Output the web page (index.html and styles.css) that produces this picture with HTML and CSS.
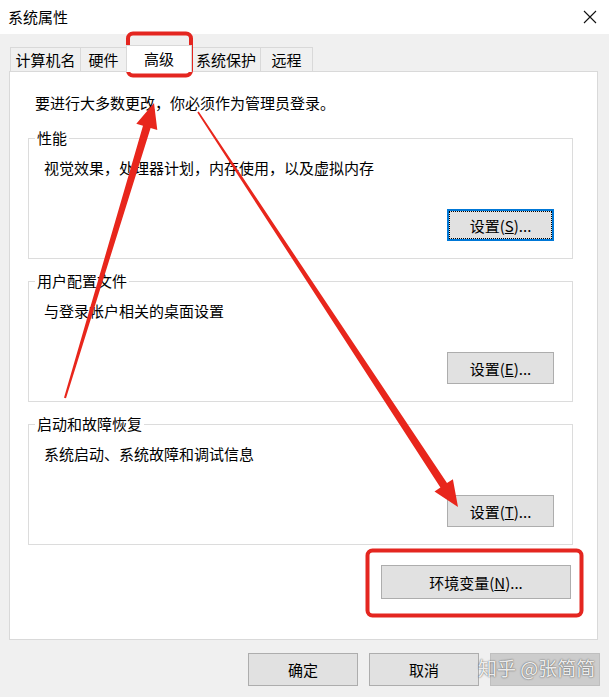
FILE: index.html
```html
<!DOCTYPE html>
<html>
<head>
    <title>系统属性</title>
    <link rel="stylesheet" href="styles.css">
</head>
<body>
    <div class="window">
        <div class="titlebar">
            <span class="title">系统属性</span>
            <svg class="close" width="14" height="14" viewBox="0 0 14 14">
                <path d="M1 1 L13 13 M13 1 L1 13" stroke="#111" stroke-width="1.1" fill="none"/>
            </svg>
        </div>

        <div class="tabs">
            <div class="tab tab-name">计算机名</div>
            <div class="tab tab-hw">硬件</div>
            <div class="tab tab-adv active">高级</div>
            <div class="tab tab-sys">系统保护</div>
            <div class="tab tab-remote">远程</div>
        </div>

        <div class="panel">
            <p class="intro">要进行大多数更改，你必须作为管理员登录。</p>

            <fieldset class="group">
                <legend>性能</legend>
                <p class="desc">视觉效果，处理器计划，内存使用，以及虚拟内存</p>
                <button class="btn focused">设置(<u>S</u>)...</button>
            </fieldset>

            <fieldset class="group">
                <legend>用户配置文件</legend>
                <p class="desc">与登录帐户相关的桌面设置</p>
                <button class="btn">设置(<u>E</u>)...</button>
            </fieldset>

            <fieldset class="group last">
                <legend>启动和故障恢复</legend>
                <p class="desc">系统启动、系统故障和调试信息</p>
                <button class="btn">设置(<u>T</u>)...</button>
            </fieldset>

            <div class="env-row">
                <button class="btn btn-wide">环境变量(<u>N</u>)...</button>
            </div>
        </div>

        <div class="footer">
            <button class="btn btn-footer">确定</button>
            <button class="btn btn-footer">取消</button>
            <button class="btn btn-footer disabled" aria-label="应用"></button>
        </div>

        <div class="watermark">知乎 @张简简</div>

        <!-- red annotations drawn on top of the screenshot -->
        <svg class="annotations" width="609" height="697" viewBox="0 0 609 697">
            <rect x="128" y="33.5" width="63" height="42" rx="5" fill="none" stroke="#e42620" stroke-width="4"/>
            <rect x="367.5" y="550.5" width="214" height="65" rx="5" fill="none" stroke="#e42620" stroke-width="4"/>
            <polygon fill="#e8261c" points="64,397.7 143,125.7 136.3,123.7 154,103 157.3,130.1 150.6,128.1 66,398.3"/>
            <polygon fill="#e8261c" points="197.3,112.4 440.4,487.5 434.5,491.4 458,507 452.9,479.2 447,483.1 198.7,111.6"/>
        </svg>
    </div>
</body>
</html>
```

FILE: styles.css
```css
body {
    margin: 0;
    background: #f0f0f0;
    font-family: "Noto Sans CJK SC", "Microsoft YaHei", sans-serif;
    font-size: 15px;
    color: #000;
}

.window {
    position: relative;
    width: 609px;
    height: 697px;
    overflow: hidden;
}

.titlebar {
    height: 34px;
    background: #fff;
    display: flex;
    align-items: center;
    justify-content: space-between;
    padding: 0 12px 0 8px;
    box-sizing: border-box;
}

.title {
    font-size: 15px;
    line-height: 20px;
}

.tabs {
    height: 37px;
    display: flex;
    align-items: flex-end;
    padding-left: 10px;
}

.tab {
    height: 24px;
    line-height: 23px;
    text-align: center;
    background: #f0f0f0;
    border: 1px solid #d9d9d9;
    border-bottom: none;
    box-sizing: border-box;
    margin-left: -1px;
}

.tab:first-child {
    margin-left: 0;
}

.tab-name { width: 71px; }
.tab-hw { width: 47px; }
.tab-adv { width: 66px; }
.tab-sys { width: 70px; }
.tab-remote { width: 53px; }

.tab.active {
    height: 27px;
    line-height: 25px;
    background: #fff;
    margin-bottom: -1px;
    position: relative;
    z-index: 1;
}

.panel {
    margin-left: 9px;
    width: 589px;
    height: 569px;
    box-sizing: border-box;
    background: #fff;
    border: 1px solid #d9d9d9;
    padding: 21px 24px 0 18px;
}

.intro {
    margin: 0 0 15px;
    padding-left: 7px;
    line-height: 20px;
}

.group {
    margin: 0 0 12px;
    border: 1px solid #dcdcdc;
    padding: 10px 18px 17px 6px;
    display: flex;
    flex-direction: column;
    align-items: flex-start;
    min-width: 0;
}

.group.last {
    margin-bottom: 0;
}

.group legend {
    padding: 0 2px;
    line-height: 20px;
    font-size: 15px;
}

.desc {
    margin: 0 0 0 9px;
    line-height: 20px;
}

.btn {
    font-family: inherit;
    font-size: 15px;
    color: #000;
    background: #e1e1e1;
    border: 1px solid #adadad;
    border-radius: 0;
    padding: 0;
    box-sizing: border-box;
}

.group .btn {
    margin-top: 31px;
    align-self: flex-end;
    width: 107px;
    height: 32px;
}

.btn.focused {
    border: 2px solid #0078d7;
    outline: 1px dotted #000;
    outline-offset: -3px;
}

.env-row {
    display: flex;
    justify-content: flex-end;
    margin-top: 20px;
    padding-right: 2px;
}

.btn-wide {
    width: 190px;
    height: 34px;
}

.footer {
    display: flex;
    justify-content: flex-end;
    gap: 11px;
    margin-top: 13px;
    padding-right: 9px;
}

.btn-footer {
    width: 110px;
    height: 33px;
}

.btn.disabled {
    background: #cccccc;
    border-color: #bfbfbf;
}

.watermark {
    position: absolute;
    left: 478px;
    top: 655px;
    font-size: 19px;
    line-height: 26px;
    color: rgba(255, 255, 255, 0.9);
    text-shadow: 0 0 2px rgba(0, 0, 0, 0.45), 0 0 1px rgba(0, 0, 0, 0.4);
}

.annotations {
    position: absolute;
    left: 0;
    top: 0;
    pointer-events: none;
}
```
